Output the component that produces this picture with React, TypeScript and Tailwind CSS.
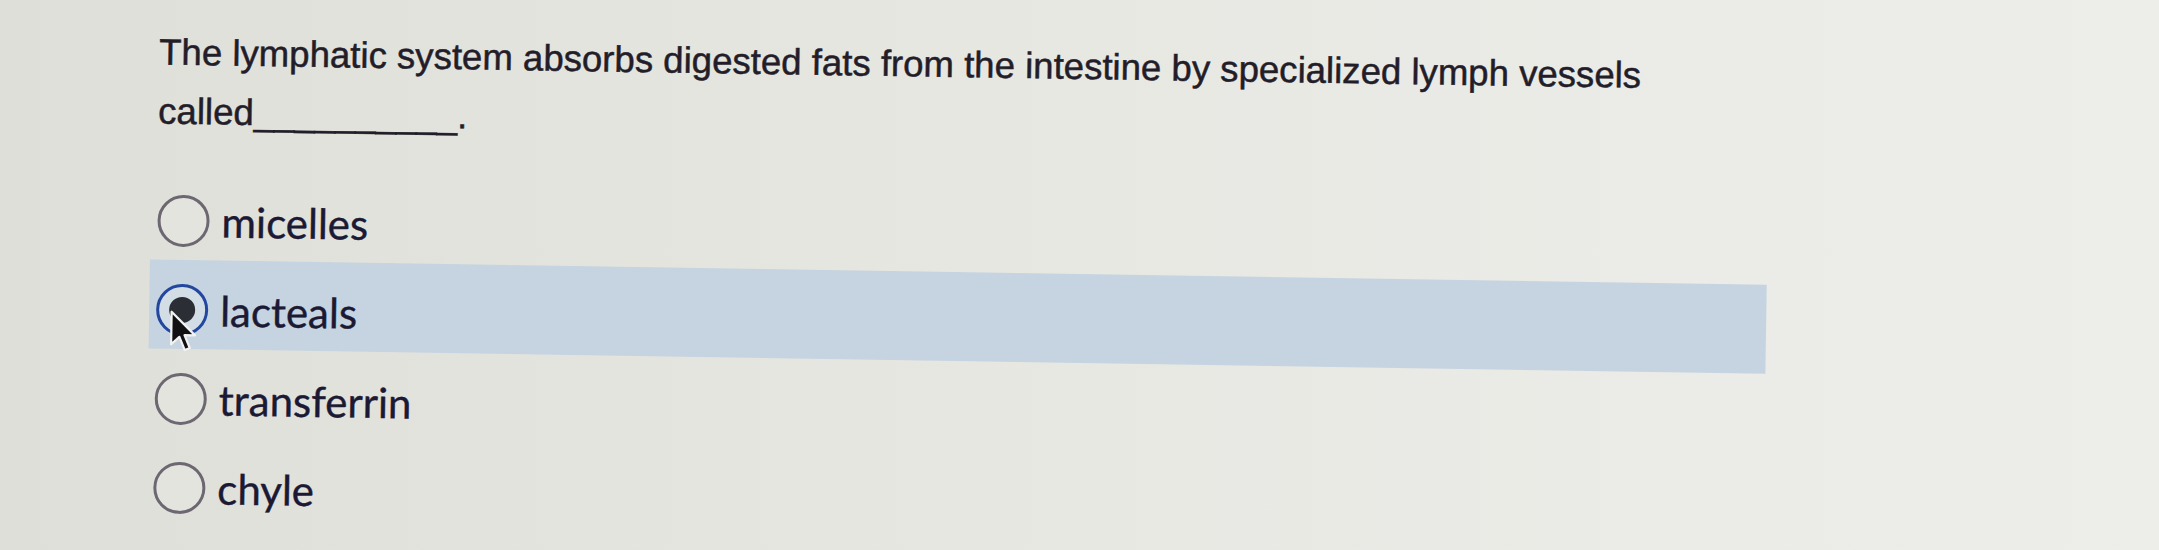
import React from "react";

type Opt = { label: string; selected?: boolean };

const options: Opt[] = [
  { label: "micelles" },
  { label: "lacteals", selected: true },
  { label: "transferrin" },
  { label: "chyle" },
];

function Cursor() {
  return (
    <svg
      className="absolute left-[13px] top-[25px]"
      width="30"
      height="46"
      viewBox="0 0 24 36"
    >
      <path
        d="M2 2 L2 28 L8.5 22 L13 32.5 L17 30.8 L12.6 20.6 L21 20.6 Z"
        fill="#111114"
        stroke="#f2f2f2"
        strokeWidth="1.8"
        strokeLinejoin="round"
      />
    </svg>
  );
}

function Radio({ selected }: { selected?: boolean }) {
  if (selected) {
    return (
      <div className="relative w-[52px] h-[52px] shrink-0">
        <div className="w-[52px] h-[52px] rounded-full border-[3.5px] border-[#23479f] bg-[#d2dde6] flex items-center justify-center">
          <div className="w-[26px] h-[26px] rounded-full bg-[#2b2e34]" />
        </div>
        <Cursor />
      </div>
    );
  }
  return (
    <div className="w-[52px] h-[52px] shrink-0 rounded-full border-[3px] border-[#6c6771] bg-[#e4e4df]" />
  );
}

export default function App() {
  return (
    <div className="w-full h-[550px] overflow-hidden bg-linear-to-r from-[#dfdfd9] via-[#e8e8e3] to-[#ededea]">
      <div className="origin-top-left rotate-[0.9deg]">
        <div className="pl-[160px] pt-[20px] w-[1700px] text-[36.6px] leading-[59px] text-[#231d29] font-['Liberation_Sans',Arial,sans-serif] [-webkit-text-stroke:0.5px_#231d29]">
          <div className="w-[1520px]">
            The lymphatic system absorbs digested fats from the intestine by
            specialized lymph vessels called__________.
          </div>
        </div>
        <div className="mt-[30px] pl-[154px] flex flex-col">
          {options.map((o) => (
            <div
              key={o.label}
              className={
                "w-[1617px] h-[89px] pl-[7px] pt-[24px] flex items-start " +
                (o.selected ? "bg-[#c5d4e0]" : "")
              }
            >
              <div className="flex items-center h-[52px]">
                <Radio selected={o.selected} />
                <span className="ml-[12px] text-[42px] leading-[42px] text-[#1b1934] font-['Lato','Noto_Sans',sans-serif] [-webkit-text-stroke:0.4px_#1b1934]">
                  {o.label}
                </span>
              </div>
            </div>
          ))}
        </div>
      </div>
    </div>
  );
}
